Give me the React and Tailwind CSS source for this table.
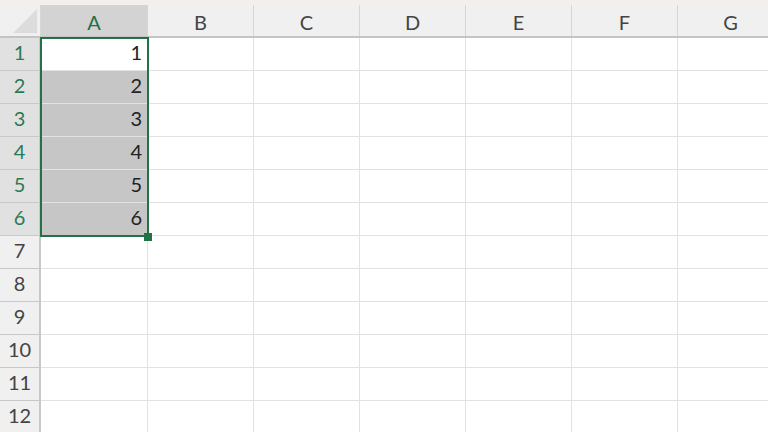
import React from "react";

const cols = ["A", "B", "C", "D", "E", "F", "G"];
const rows = [1, 2, 3, 4, 5, 6, 7, 8, 9, 10, 11, 12];
const values = { 1: 1, 2: 2, 3: 3, 4: 4, 5: 5, 6: 6 };

const App = () => {
  return (
    <div className="relative w-[768px] h-[432px] overflow-hidden bg-white font-['Lato','Liberation_Sans',sans-serif] text-[20px]">
      {/* top strip */}
      <div className="h-[5px] bg-[#f4efed]" />

      {/* column headers */}
      <div className="flex h-[33px] bg-[#f0f0f0] border-b-2 border-[#c4c4c4]">
        <div className="w-[41px] shrink-0 flex items-end justify-end pr-[3px] pb-[3px] border-r border-[#d6d6d6]">
          <svg width="24" height="24" viewBox="0 0 24 24">
            <polygon points="24,0 24,24 0,24" fill="#dcdcdc" />
          </svg>
        </div>
        {cols.map((c) => (
          <div
            key={c}
            className={`shrink-0 flex items-center justify-center pt-[2px] border-r border-[#d6d6d6] ${
              c === "A"
                ? "w-[107px] bg-[#d3d3d3] text-[#1e7145]"
                : "w-[106px] text-[#444]"
            }`}
          >
            {c}
          </div>
        ))}
      </div>

      {/* rows */}
      {rows.map((r) => {
        const selected = r <= 6;
        return (
          <div key={r} className="flex h-[33px]">
            <div
              className={`w-[41px] shrink-0 flex items-end justify-center pb-[3px] border-r-2 border-b border-[#c8c8c8] ${
                selected
                  ? "bg-[#e1e1e1] text-[#2a7a55]"
                  : "bg-[#f0f0f0] text-[#444]"
              }`}
            >
              {r}
            </div>
            {cols.map((c) => (
              <div
                key={c}
                className={`shrink-0 flex items-end justify-end pr-[5px] pb-[3px] border-r border-b border-[#e2e2e2] text-[#222] ${
                  c === "A" ? "w-[107px]" : "w-[106px]"
                } ${c === "A" && selected && r > 1 ? "bg-[#c6c6c6]" : ""}`}
              >
                {c === "A" ? values[r] : ""}
              </div>
            ))}
          </div>
        );
      })}

      {/* selection outline */}
      <div className="absolute left-[40px] top-[37px] w-[109px] h-[200px] border-2 border-[#217346] pointer-events-none" />
      <div className="absolute left-[144px] top-[233px] w-[8px] h-[8px] bg-[#217346]" />
    </div>
  );
};

export default App;
